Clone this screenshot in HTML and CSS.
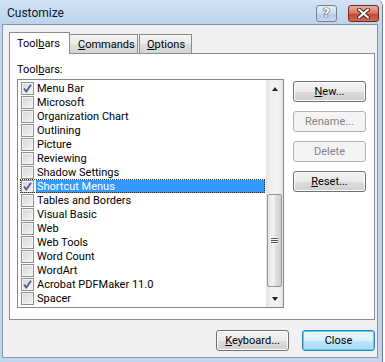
FILE: index.html
```html
<!DOCTYPE html>
<html lang="en">
<head>
    <meta charset="UTF-8">
    <title>Customize</title>
    <link rel="stylesheet" href="styles.css">
</head>
<body>
<div class="window">
    <!-- title bar -->
    <div class="titlebar">
        <span class="title">Customize</span>
        <div class="caption-buttons">
            <div class="cap-btn help"><span class="help-glyph">?</span></div>
            <div class="cap-btn close">
                <svg width="15" height="11" viewBox="0 0 15 11">
                    <path d="M3 1.5 L12 9.5 M12 1.5 L3 9.5" stroke="#4a2a22" stroke-width="4" stroke-linecap="round"/>
                    <path d="M3 1.5 L12 9.5 M12 1.5 L3 9.5" stroke="#fff" stroke-width="2" stroke-linecap="round"/>
                </svg>
            </div>
        </div>
    </div>
    <!-- client area -->
    <div class="client">
        <div class="tabs">
            <div class="tab active">Tool<u>b</u>ars</div>
            <div class="tab tab-commands"><u>C</u>ommands</div>
            <div class="tab tab-options"><u>O</u>ptions</div>
        </div>
        <div class="panel">
            <div class="label">Tool<u>b</u>ars:</div>
            <div class="panel-body">
                <div class="listbox">
                    <div class="items">
                        <div class="row"><span class="check on"><svg width="11" height="11" viewBox="0 0 11 11"><path d="M2 5.5 L4.3 8.5 L9 1.8" stroke="#4a5f97" stroke-width="1.8" fill="none"/></svg></span><span class="text">Menu Bar</span></div>
                        <div class="row"><span class="check"></span><span class="text">Microsoft</span></div>
                        <div class="row"><span class="check"></span><span class="text">Organization Chart</span></div>
                        <div class="row"><span class="check"></span><span class="text">Outlining</span></div>
                        <div class="row"><span class="check"></span><span class="text">Picture</span></div>
                        <div class="row"><span class="check"></span><span class="text">Reviewing</span></div>
                        <div class="row"><span class="check"></span><span class="text">Shadow Settings</span></div>
                        <div class="row selected"><span class="check on"><svg width="11" height="11" viewBox="0 0 11 11"><path d="M2 5.5 L4.3 8.5 L9 1.8" stroke="#4a5f97" stroke-width="1.8" fill="none"/></svg></span><span class="text">Shortcut Menus</span></div>
                        <div class="row"><span class="check"></span><span class="text">Tables and Borders</span></div>
                        <div class="row"><span class="check"></span><span class="text">Visual Basic</span></div>
                        <div class="row"><span class="check"></span><span class="text">Web</span></div>
                        <div class="row"><span class="check"></span><span class="text">Web Tools</span></div>
                        <div class="row"><span class="check"></span><span class="text">Word Count</span></div>
                        <div class="row"><span class="check"></span><span class="text">WordArt</span></div>
                        <div class="row"><span class="check on"><svg width="11" height="11" viewBox="0 0 11 11"><path d="M2 5.5 L4.3 8.5 L9 1.8" stroke="#4a5f97" stroke-width="1.8" fill="none"/></svg></span><span class="text">Acrobat PDFMaker 11.0</span></div>
                        <div class="row"><span class="check"></span><span class="text">Spacer</span></div>
                    </div>
                    <!-- vertical scrollbar -->
                    <div class="scrollbar">
                        <div class="arrow up"></div>
                        <div class="track">
                            <div class="thumb">
                                <span class="grip"></span>
                            </div>
                        </div>
                        <div class="arrow down"></div>
                    </div>
                </div>
                <div class="side-buttons">
                    <div class="button"><u>N</u>ew...</div>
                    <div class="button disabled">Rename...</div>
                    <div class="button disabled">Delete</div>
                    <div class="button"><u>R</u>eset...</div>
                </div>
            </div>
        </div>
        <div class="footer">
            <div class="button"><u>K</u>eyboard...</div>
            <div class="button default">Close</div>
        </div>
    </div>
</div>
</body>
</html>
```

FILE: styles.css
```css
body {
    margin: 0;
    background: #fff;
    font-family: Roboto, "Liberation Sans", sans-serif;
    font-size: 11px;
    color: #000;
}
u {
    text-decoration: underline;
    text-underline-offset: 1px;
}

/* window frame */
.window {
    width: 382px;
    height: 362px;
    display: flex;
    flex-direction: column;
    background: #c2d5ec;
    border-right: 1px solid #6f7d8e;
    border-top-right-radius: 6px;
}
.titlebar {
    height: 24px;
    display: flex;
    align-items: flex-start;
    justify-content: space-between;
    background: linear-gradient(#d3e2f4, #bed3ec);
    border-top-right-radius: 6px;
}
.title {
    margin: 6px 0 0 7px;
    font-size: 12px;
    color: #0b1a2e;
}
.caption-buttons {
    display: flex;
    gap: 11px;
    margin: 5px 3px 0 0;
}
.cap-btn {
    height: 15px;
    border-radius: 3px;
    display: flex;
    align-items: center;
    justify-content: center;
}
.help {
    width: 19px;
    border: 1px solid #70819a;
    background: linear-gradient(#e6eef8, #cddcee 50%, #b5cae4 51%, #c6d8ee);
}
.help-glyph {
    font-family: "DejaVu Sans", sans-serif;
    font-weight: bold;
    font-size: 12px;
    color: #fff;
    text-shadow: 0 0 1px #2d3a4c, 0 0 1px #2d3a4c, 0 0 1px #2d3a4c;
    line-height: 15px;
}
.close {
    width: 29px;
    border: 1px solid #6d2c20;
    background: linear-gradient(#eab1a3, #d6705a 50%, #c2442b 51%, #d4694f);
}

/* client area */
.client {
    flex: 1;
    margin: 0 4px 4px 2px;
    border: 1px solid #8397b2;
    background: #f0f0f0;
    padding: 7px 2px 0 6px;
    display: flex;
    flex-direction: column;
}
.tabs {
    display: flex;
    align-items: flex-end;
    height: 21px;
    position: relative;
    z-index: 1;
}
.tab {
    height: 18px;
    border: 1px solid #898c95;
    border-bottom: none;
    background: linear-gradient(#f3f3f3, #ebebeb 50%, #dedede 51%, #d5d5d5);
    box-sizing: border-box;
    padding: 2px 0 0 7px;
    line-height: 15px;
}
.tab.active {
    width: 61px;
    height: 22px;
    margin-bottom: -1px;
    background: #fff;
    padding-top: 3px;
    position: relative;
    z-index: 2;
}
.tab-commands {
    width: 69px;
    margin-left: -1px;
    height: 19px;
    padding-left: 8px;
}
.tab-options {
    width: 53px;
    margin-left: 1px;
    height: 19px;
    padding-left: 7px;
}
.panel {
    width: 366px;
    height: 267px;
    box-sizing: border-box;
    border: 1px solid #898c95;
    background: #fff;
    padding: 8px 0 0 7px;
}
.label {
    line-height: 16px;
    height: 17px;
}
.panel-body {
    display: flex;
    gap: 9px;
}

/* list with checkboxes */
.listbox {
    width: 267px;
    height: 229px;
    box-sizing: border-box;
    border: 1px solid #828790;
    display: flex;
}
.items {
    flex: 1;
    padding: 1px 0 0 2px;
}
.row {
    height: 14px;
    display: flex;
    align-items: center;
    width: 245px;
    box-sizing: border-box;
    padding-left: 1px;
}
.row.selected {
    outline: 1px dotted #333;
    outline-offset: -1px;
}
.check {
    width: 13px;
    height: 13px;
    box-sizing: border-box;
    border: 1px solid #8e8f8f;
    background: linear-gradient(135deg, #d2d5da, #f5f5f5);
    box-shadow: inset 0 0 0 1px #f4f4f4;
    display: flex;
    align-items: center;
    justify-content: center;
}
.text {
    margin-left: 2px;
    padding-left: 1px;
    line-height: 13px;
    color: #000;
}
.row.selected .text {
    flex: 1;
    background: #3399ff;
    color: #fff;
}

/* scrollbar */
.scrollbar {
    width: 17px;
    display: flex;
    flex-direction: column;
    background: linear-gradient(to right, #e4e4e4, #f2f2f2 40%, #f2f2f2 70%, #e7e7e7);
}
.arrow {
    height: 17px;
    display: flex;
    align-items: center;
    justify-content: center;
}
.arrow::before {
    content: "";
    border-left: 3.5px solid transparent;
    border-right: 3.5px solid transparent;
}
.arrow.up::before {
    border-bottom: 4px solid #222;
}
.arrow.down::before {
    border-top: 4px solid #222;
}
.track {
    flex: 1;
    display: flex;
    flex-direction: column;
    padding: 97px 0 3px 0;
}
.thumb {
    flex: 1;
    margin: 0 1px;
    border: 1px solid #959595;
    border-radius: 2px;
    background: linear-gradient(to right, #e5e5e5, #f3f3f3 45%, #e0e0e0 55%, #cfcfcf);
    display: flex;
    align-items: center;
    justify-content: center;
}
.grip {
    width: 7px;
    height: 7px;
    background: repeating-linear-gradient(#f8f8f8 0 1px, #555 1px 2px);
}

/* buttons */
.side-buttons {
    display: flex;
    flex-direction: column;
    gap: 9px;
    padding-top: 2px;
}
.button {
    width: 73px;
    height: 21px;
    box-sizing: border-box;
    border: 1px solid #707070;
    border-radius: 3px;
    background: linear-gradient(#f2f2f2, #ebebeb 50%, #dddddd 51%, #cfcfcf);
    box-shadow: inset 0 0 0 1px #fcfcfc;
    text-align: center;
    line-height: 19px;
}
.button.disabled {
    border-color: #adb2b5;
    background: #f4f4f4;
    box-shadow: none;
    color: #838383;
}
.button.default {
    border-color: #3c7fb1;
    box-shadow: inset 0 0 0 1px #48d8fb;
    background: linear-gradient(#eaf6fd, #d9f0fc 50%, #bee6fd 51%, #a7d9f5);
}
.footer {
    display: flex;
    justify-content: flex-end;
    gap: 13px;
    margin-top: 10px;
}
```
